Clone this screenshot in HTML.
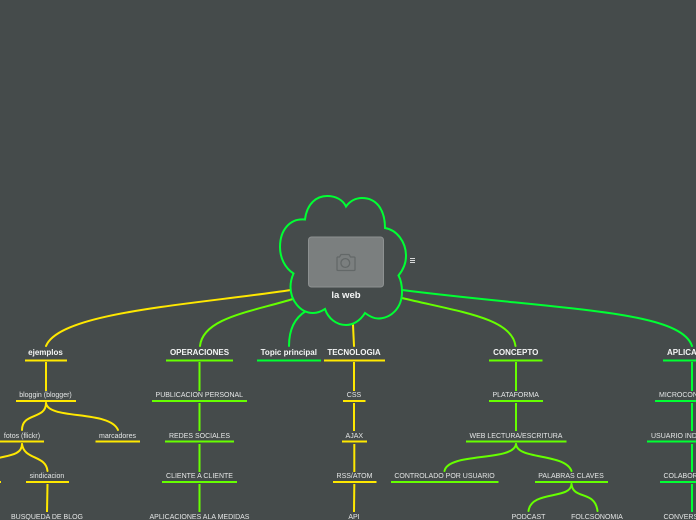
<!DOCTYPE html>
<html>
<head>
<meta charset="utf-8">
<style>
html,body{margin:0;padding:0;width:696px;height:520px;overflow:hidden;background:#454b4b;}
svg{display:block;}
text{font-family:"Liberation Sans",sans-serif;fill:#e4e6e6;font-size:7px;text-anchor:middle;}
text.b{font-weight:bold;font-size:8px;fill:#f4f5f5;}
text.s{text-anchor:start;}
.y{stroke:#ffe800;}
.l{stroke:#66ff00;}
.g{stroke:#00ff33;}
path,line{fill:none;stroke-width:2;stroke-linecap:round;}
line{stroke-linecap:butt;}
</style>
</head>
<body>
<svg width="696" height="520" viewBox="0 0 696 520" xmlns="http://www.w3.org/2000/svg">
<!-- main connectors -->
<path class="y" d="M291,290 C190,305 60,312 46,346"/>
<path class="l" d="M293,299 C250,312 203,318 200,346"/>
<path class="g" d="M306,311 C296,317 289,328 289,346"/>
<path class="y" d="M353,325 L354,346"/>
<path class="l" d="M402,298 C460,312 512,318 515.5,346"/>
<path class="g" d="M402,290 C560,310 680,310 692,346"/>

<!-- cloud -->
<path style="fill:#454b4b" class="g" d="M305,219.5 C307,203 317,196 327,196 C336,196 343,200 346,206.5 C350,201 356,198 362,198 C376,198 385,209 385,228 C397,230 406,242 406,256 C406,264 403,270 398.5,275.5 C401,280 402,286 402,292 C402,308 391,318.5 378,318.5 C373,318.5 369,316 365,313 C360,321 353,325 346,325 C336,325 328,318 325,309 C322,311 318,313 313,313 C300,313 290.5,300 290.5,287 C290.5,282 291.5,278 293.5,273.5 C285,268 280,258 280,247 C280,230 290,218 305,219.5 Z"/>

<!-- image placeholder -->
<rect x="308.5" y="237" width="75" height="50" rx="3" ry="3" fill="#7b7f7f" stroke="#8d9191" stroke-width="1"/>
<g fill="none" stroke="#636868" stroke-width="1.3">
<path style="stroke:#636868;stroke-width:1.3" d="M337,257 h2.5 l1.5,-2.5 h8 l1.5,2.5 h3.5 a1,1 0 0 1 1,1 v11.5 a1,1 0 0 1 -1,1 h-16 a1,1 0 0 1 -1,-1 v-11.5 a1,1 0 0 1 1,-1 Z"/>
<circle cx="345.3" cy="263" r="4.4"/>
</g>
<text class="b" x="346" y="298" style="font-size:9.6px">la web</text>
<rect x="410" y="258" width="5" height="1" fill="#d8dada"/>
<rect x="410" y="260" width="5" height="1" fill="#d8dada"/>
<rect x="410" y="262" width="5" height="1" fill="#d8dada"/>

<!-- level 1 -->
<text class="b" x="45.5" y="355">ejemplos</text>
<line class="y" x1="25" y1="360.5" x2="67" y2="360.5"/>
<text class="b" x="199.5" y="355">OPERACIONES</text>
<line class="l" x1="166" y1="360.5" x2="233" y2="360.5"/>
<text class="b" x="288.8" y="355">Topic principal</text>
<line class="g" x1="257" y1="360.5" x2="321" y2="360.5"/>
<text class="b" x="354" y="355">TECNOLOGIA</text>
<line class="y" x1="324" y1="360.5" x2="385" y2="360.5"/>
<text class="b" x="515.7" y="355">CONCEPTO</text>
<line class="l" x1="489" y1="360.5" x2="542.5" y2="360.5"/>
<text class="b s" x="667" y="355">APLICACIONES</text>
<line class="g" x1="663" y1="360.5" x2="696" y2="360.5"/>

<!-- verticals L1-L2 -->
<line class="y" x1="46" y1="362" x2="46" y2="391"/>
<line class="l" x1="199.5" y1="362" x2="199.5" y2="391"/>
<line class="y" x1="354" y1="362" x2="354" y2="391"/>
<line class="l" x1="516" y1="362" x2="516" y2="391"/>
<line class="g" x1="692" y1="362" x2="692" y2="391"/>

<!-- level 2 -->
<text x="45.5" y="397">bloggin (blogger)</text>
<line class="y" x1="16" y1="401" x2="76" y2="401"/>
<text x="199.3" y="397">PUBLICACION PERSONAL</text>
<line class="l" x1="152" y1="401" x2="247" y2="401"/>
<text x="354" y="397">CSS</text>
<line class="y" x1="343" y1="401" x2="365.5" y2="401"/>
<text x="515.7" y="397">PLATAFORMA</text>
<line class="l" x1="489" y1="401" x2="543" y2="401"/>
<text class="s" x="659" y="397">MICROCONTENIDO</text>
<line class="g" x1="655" y1="401" x2="696" y2="401"/>

<!-- L2-L3 -->
<path class="y" d="M46,403 C46,420 22,412 22,430"/>
<path class="y" d="M46,403 C48,420 110,410 118,430"/>
<line class="l" x1="199.5" y1="403" x2="199.5" y2="431"/>
<line class="y" x1="354" y1="403" x2="354" y2="431"/>
<line class="l" x1="516" y1="403" x2="516" y2="431"/>
<line class="g" x1="692" y1="403" x2="692" y2="431"/>

<!-- level 3 -->
<text x="22" y="438">fotos (flickr)</text>
<line class="y" x1="0" y1="441.5" x2="44" y2="441.5"/>
<text x="117.5" y="438">marcadores</text>
<line class="y" x1="95.5" y1="441.5" x2="140" y2="441.5"/>
<text x="199.5" y="438">REDES SOCIALES</text>
<line class="l" x1="165" y1="441.5" x2="234" y2="441.5"/>
<text x="354.3" y="438">AJAX</text>
<line class="y" x1="342" y1="441.5" x2="367" y2="441.5"/>
<text x="516" y="438">WEB LECTURA/ESCRITURA</text>
<line class="l" x1="466" y1="441.5" x2="566.5" y2="441.5"/>
<text class="s" x="651" y="438">USUARIO INDEPENDIENTE</text>
<line class="g" x1="647" y1="441.5" x2="696" y2="441.5"/>

<!-- L3-L4 -->
<path class="y" d="M22,444 C22,458 0,455 -10,461"/>
<path class="y" d="M22,444 C24,460 46,455 47.5,471"/>
<line class="l" x1="199.5" y1="444" x2="199.5" y2="472"/>
<line class="y" x1="354.3" y1="444" x2="354.3" y2="472"/>
<path class="l" d="M516,444 C514,462 448,452 444.5,471"/>
<path class="l" d="M516,444 C517,460 565,453 571.5,471"/>
<line class="g" x1="692" y1="444" x2="692" y2="472"/>

<!-- level 4 -->
<line class="y" x1="-5" y1="482" x2="1" y2="482"/>
<text x="47" y="478">sindicacion</text>
<line class="y" x1="26" y1="482" x2="69" y2="482"/>
<text x="199.5" y="478">CLIENTE A CLIENTE</text>
<line class="l" x1="162" y1="482" x2="237" y2="482"/>
<text x="354.5" y="478">RSS/ATOM</text>
<line class="y" x1="333" y1="482" x2="376.5" y2="482"/>
<text x="444.5" y="478">CONTROLADO POR USUARIO</text>
<line class="l" x1="391" y1="482" x2="498.5" y2="482"/>
<text x="571" y="478">PALABRAS CLAVES</text>
<line class="l" x1="535" y1="482" x2="608" y2="482"/>
<text class="s" x="663.5" y="478">COLABORACION</text>
<line class="g" x1="660" y1="482" x2="696" y2="482"/>

<!-- L4-L5 -->
<line class="y" x1="47.5" y1="484" x2="47" y2="512"/>
<line class="l" x1="199.5" y1="484" x2="199.5" y2="512"/>
<line class="y" x1="354.3" y1="484" x2="354" y2="512"/>
<path class="l" d="M571.5,484 C571,500 531,490 528.5,511"/>
<path class="l" d="M571.5,484 C573,500 595,490 597.5,511"/>
<line class="g" x1="692" y1="484" x2="692" y2="512"/>

<!-- level 5 -->
<text x="47" y="519">BUSQUEDA DE BLOG</text>
<text x="199.5" y="519">APLICACIONES ALA MEDIDAS</text>
<text x="354" y="519">API</text>
<text x="528.5" y="519">PODCAST</text>
<text x="597" y="519">FOLCSONOMIA</text>
<text class="s" x="663.5" y="519">CONVERSACION</text>
</svg>
</body>
</html>
